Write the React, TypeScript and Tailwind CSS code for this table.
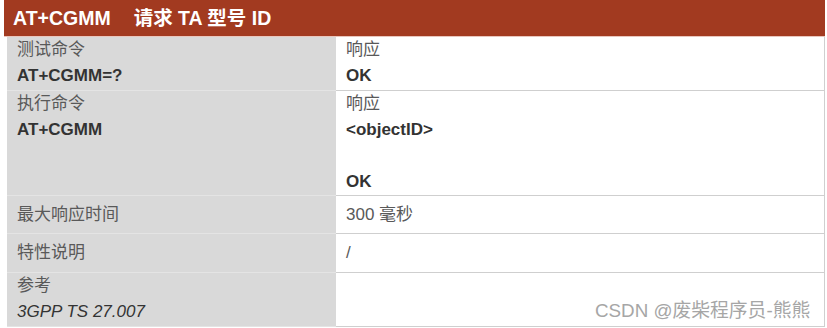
import React from 'react';

const latin = "font-['Liberation_Sans','Noto_Sans_CJK_SC',sans-serif]";

type Row = {
  left: React.ReactNode;
  right: React.ReactNode;
  pad: string;
};

const rows: Row[] = [
  {
    left: (
      <>
        <div className="text-[#595959]">测试命令</div>
        <div className="font-bold text-[#333]">AT+CGMM=?</div>
      </>
    ),
    right: (
      <>
        <div className="text-[#595959]">响应</div>
        <div className="font-bold text-[#333]">OK</div>
      </>
    ),
    pad: 'pt-0 pb-px',
  },
  {
    left: (
      <>
        <div className="text-[#595959]">执行命令</div>
        <div className="font-bold text-[#333]">AT+CGMM</div>
      </>
    ),
    right: (
      <>
        <div className="text-[#595959]">响应</div>
        <div className="font-bold text-[#333]">&lt;objectID&gt;</div>
        <div>&nbsp;</div>
        <div className="font-bold text-[#333]">OK</div>
      </>
    ),
    pad: 'pt-0 pb-0',
  },
  {
    left: <div className="text-[#595959]">最大响应时间</div>,
    right: <div className="text-[#595959]">300 毫秒</div>,
    pad: 'pt-[6px] pb-[5px]',
  },
  {
    left: <div className="text-[#595959]">特性说明</div>,
    right: <div className="text-[#595959]">/</div>,
    pad: 'pt-[6px] pb-[6px]',
  },
  {
    left: (
      <>
        <div className="text-[#595959]">参考</div>
        <div className="italic text-[#333]">3GPP TS 27.007</div>
      </>
    ),
    right: <div>&nbsp;</div>,
    pad: 'pt-0 pb-px',
  },
];

export default function App() {
  return (
    <div className={`relative w-[827px] h-[328px] bg-white ${latin} text-[17px] leading-[26px]`}>
      <div className="ml-[4px] w-[821px] h-[37px] bg-[#a23a20] border-b border-[#e9c6bd] flex items-center pl-[9px] text-white font-bold text-[19.5px]">
        <span>AT+CGMM</span>
        <span className="ml-[23px]">请求 TA 型号 ID</span>
      </div>
      <div className="ml-[7px] w-[818px]">
        {rows.map((row, i) => (
          <div key={i} className="grid grid-cols-[329px_489px]">
            <div className={`bg-[#d9d9d9] border-b border-[#e4e4e4] pl-[10px] ${row.pad}`}>{row.left}</div>
            <div className={`border-b border-r border-[#cfcfcf] pl-[10px] ${row.pad}`}>{row.right}</div>
          </div>
        ))}
      </div>
      <div className="absolute left-[595px] top-[298px] text-[18.8px] leading-[26px] text-[#a6a6a6]">
        CSDN @废柴程序员-熊熊
      </div>
    </div>
  );
}
